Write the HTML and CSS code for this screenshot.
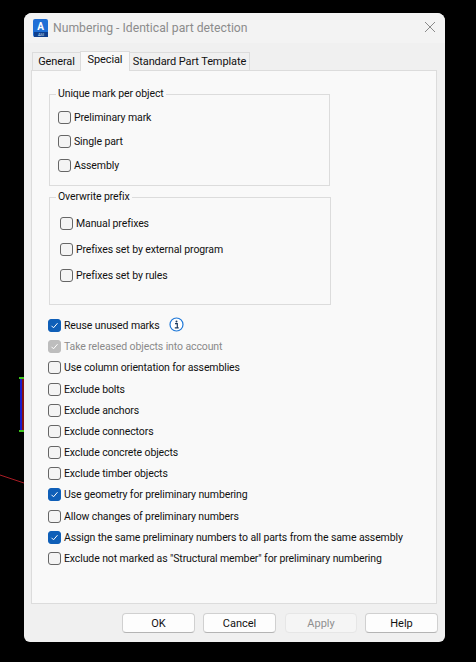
FILE: index.html
```html
<!DOCTYPE html>
<html lang="en">
<head>
  <meta charset="UTF-8" />
  <title>Numbering - Identical part detection</title>
  <link rel="stylesheet" href="styles.css">
</head>
<body>

<!-- model lines behind the dialog -->
<svg class="canvas" width="24" height="662" viewBox="0 0 24 662">
  <line x1="0" y1="475" x2="24" y2="483" stroke="#a81c24" stroke-width="1"/>
  <line x1="21" y1="378" x2="21" y2="432" stroke="#1a1ac8" stroke-width="2"/>
  <line x1="23" y1="378" x2="23" y2="432" stroke="#b01818" stroke-width="1.5"/>
  <line x1="19" y1="378" x2="24" y2="378" stroke="#3cc41c" stroke-width="2"/>
  <line x1="19" y1="431" x2="24" y2="431" stroke="#3cc41c" stroke-width="2"/>
</svg>

<div class="dialog">
  <div class="titlebar">
    <svg class="app-icon" width="15" height="18" viewBox="0 0 15 18">
      <path d="M2 0h11a2 2 0 0 1 2 2v16H2a2 2 0 0 1-2-2V2a2 2 0 0 1 2-2z" fill="#1f6fd6"/>
      <rect x="1" y="13" width="14" height="5" fill="#0e3f8e"/>
      <text x="7.5" y="10.5" class="app-icon-letter">A</text>
      <text x="8" y="17" class="app-icon-tag">ASI</text>
    </svg>
    <span class="title">Numbering - Identical part detection</span>
    <svg class="close" width="12" height="12" viewBox="0 0 12 12">
      <path d="M1 1l10 10M11 1L1 11" stroke="#8a8a8a" stroke-width="1" fill="none"/>
    </svg>
  </div>

  <div class="tabs">
    <div class="tab general">General</div>
    <div class="tab active">Special</div>
    <div class="tab template">Standard Part Template</div>
  </div>

  <div class="panel">
    <fieldset class="group first">
      <legend>Unique mark per object</legend>
      <label class="check"><span class="box"></span>Preliminary mark</label>
      <label class="check"><span class="box"></span>Single part</label>
      <label class="check"><span class="box"></span>Assembly</label>
    </fieldset>

    <fieldset class="group second">
      <legend>Overwrite prefix</legend>
      <label class="check"><span class="box"></span>Manual prefixes</label>
      <label class="check"><span class="box"></span>Prefixes set by external program</label>
      <label class="check"><span class="box"></span>Prefixes set by rules</label>
    </fieldset>

    <div class="options">
      <label class="check">
        <span class="box on"><svg width="9" height="9" viewBox="0 0 9 9"><path d="M1.5 4.8l2 2 4-4.6" stroke="#fff" stroke-width="1" fill="none"/></svg></span>Reuse unused marks
        <svg class="info" width="15" height="15" viewBox="0 0 15 15">
          <circle cx="7.5" cy="7.5" r="6.5" fill="#fff" stroke="#1f78d8" stroke-width="1.2"/>
          <circle cx="7.5" cy="4.4" r="1" fill="#1c3a5e"/>
          <path d="M6 6.6h2.3v4M5.8 10.8h3.9" stroke="#1c3a5e" stroke-width="1.2" fill="none"/>
        </svg>
      </label>
      <label class="check muted">
        <span class="box off-on"><svg width="9" height="9" viewBox="0 0 9 9"><path d="M1.5 4.8l2 2 4-4.6" stroke="#fff" stroke-width="1" fill="none"/></svg></span>Take released objects into account
      </label>
      <label class="check"><span class="box"></span>Use column orientation for assemblies</label>
      <label class="check"><span class="box"></span>Exclude bolts</label>
      <label class="check"><span class="box"></span>Exclude anchors</label>
      <label class="check"><span class="box"></span>Exclude connectors</label>
      <label class="check"><span class="box"></span>Exclude concrete objects</label>
      <label class="check"><span class="box"></span>Exclude timber objects</label>
      <label class="check">
        <span class="box on"><svg width="9" height="9" viewBox="0 0 9 9"><path d="M1.5 4.8l2 2 4-4.6" stroke="#fff" stroke-width="1" fill="none"/></svg></span>Use geometry for preliminary numbering
      </label>
      <label class="check"><span class="box"></span>Allow changes of preliminary numbers</label>
      <label class="check">
        <span class="box on"><svg width="9" height="9" viewBox="0 0 9 9"><path d="M1.5 4.8l2 2 4-4.6" stroke="#fff" stroke-width="1" fill="none"/></svg></span>Assign the same preliminary numbers to all parts from the same assembly
      </label>
      <label class="check"><span class="box"></span>Exclude not marked as "Structural member" for preliminary numbering</label>
    </div>
  </div>

  <div class="buttons">
    <button class="btn">OK</button>
    <button class="btn">Cancel</button>
    <button class="btn disabled">Apply</button>
    <button class="btn">Help</button>
  </div>
</div>

</body>
</html>
```

FILE: styles.css
```css
* {
  margin: 0;
  padding: 0;
  box-sizing: border-box;
}

html, body {
  height: 662px;
  overflow: hidden;
}

body {
  background-color: #000;
  font-family: 'Roboto', 'Liberation Sans', sans-serif;
  font-size: 10.5px;
  letter-spacing: -0.11px;
  color: #111;
  padding: 13px 0 0 24px;
}

.canvas {
  position: absolute;
  left: 0;
  top: 0;
}

.dialog {
  position: relative;
  width: 421px;
  height: 629px;
  background-color: #f0f0f0;
  border-radius: 8px 8px 6px 6px;
  display: flex;
  flex-direction: column;
}

.titlebar {
  height: 30px;
  flex: none;
  background-color: #f3f3f3;
  border-radius: 8px 8px 0 0;
  display: flex;
  align-items: center;
  padding: 0 9px;
}

.app-icon {
  margin-right: 5px;
  margin-top: -1px;
}

.app-icon-letter {
  font-size: 10px;
  font-weight: 700;
  fill: #fff;
  text-anchor: middle;
}

.app-icon-tag {
  font-size: 4px;
  letter-spacing: 0;
  fill: #dfe9f7;
  text-anchor: middle;
}

.title {
  font-size: 12.2px;
  letter-spacing: 0;
  color: #8c8c8c;
}

.close {
  margin-left: auto;
  margin-top: -3px;
}

.tabs {
  height: 27px;
  flex: none;
  display: flex;
  align-items: flex-end;
  padding-left: 8px;
  position: relative;
  z-index: 1;
}

.tab {
  height: 18px;
  line-height: 17px;
  font-size: 11px;
  white-space: nowrap;
  text-align: center;
  background-color: #f0f0f0;
  border: 1px solid #dcdcdc;
  border-bottom: none;
  border-left: none;
}

.tab.general {
  width: 49px;
  border-left: 1px solid #dcdcdc;
}

.tab.template {
  width: 120px;
}

.tab.active {
  width: 50px;
  height: 20px;
  line-height: 15px;
  background-color: #f9f9f9;
  border-left: 1px solid #dcdcdc;
  margin-left: -1px;
  margin-bottom: -1px;
}

.panel {
  width: 406px;
  height: 534px;
  flex: none;
  margin-left: 7px;
  background-color: #f9f9f9;
  border: 1px solid #dcdcdc;
  padding: 0 16px;
}

.group {
  border: 1px solid #dcdcdc;
  margin-left: 1px;
  display: flex;
  flex-direction: column;
}

.group legend {
  margin-left: 6px;
  padding: 0 2px;
  line-height: 14px;
}

.group.first {
  width: 281px;
  height: 99px;
  margin-top: 16px;
  padding-top: 7px;
  gap: 6px;
}

.group.first .check {
  margin-left: 8px;
}

.group.second {
  width: 282px;
  height: 115px;
  margin-top: 4px;
  padding-top: 10px;
  gap: 8px;
}

.group.second .check {
  margin-left: 10px;
}

.group .check {
  height: 18px;
}

.check {
  display: flex;
  align-items: center;
  white-space: nowrap;
}

.box {
  width: 13px;
  height: 13px;
  flex: none;
  margin-right: 3px;
  border: 1px solid #666;
  border-radius: 3px;
  background-color: #f4f4f4;
  display: flex;
  align-items: center;
  justify-content: center;
}

.box.on {
  background-color: #0f5fb8;
  border-color: #0f5fb8;
}

.box.off-on {
  background-color: #bdbdbd;
  border-color: #bdbdbd;
}

.check.muted {
  color: #8a8a8a;
}

.info {
  margin-left: 9px;
  margin-top: -2px;
}

.options {
  margin-top: 10px;
  display: flex;
  flex-direction: column;
}

.options .check {
  height: 21.18px;
}

.buttons {
  display: flex;
  gap: 8px;
  margin-top: 9px;
  margin-left: 98px;
}

.btn {
  width: 73px;
  height: 20px;
  font-family: inherit;
  font-size: 11px;
  color: #111;
  background-color: #fdfdfd;
  border: 1px solid #d0d0d0;
  border-bottom-color: #b4b4b4;
  border-radius: 4px;
}

.btn.disabled {
  width: 72px;
  margin-left: 1px;
  color: #8f8f8f;
  background-color: #f5f5f5;
  border-color: #e6e6e6;
}
```
